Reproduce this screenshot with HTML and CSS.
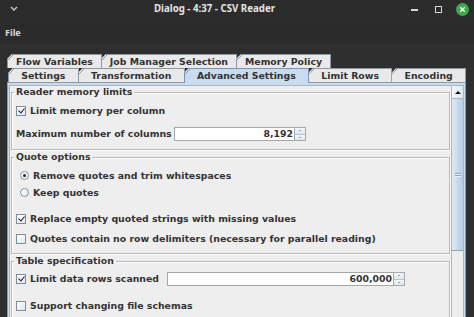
FILE: index.html
```html
<!DOCTYPE html>
<html>
<head>
<meta charset="utf-8">
<title>Dialog - 4:37 - CSV Reader</title>
<link rel="stylesheet" href="styles.css">
</head>
<body>
<div class="window">
  <header class="titlebar">
    <div class="tb-left">
      <svg class="chev" width="8" height="5" viewBox="0 0 8 5"><path d="M1 1 L4 4 L7 1" fill="none" stroke="#cfcfcf" stroke-width="1.3"/></svg>
    </div>
    <div class="tb-title">Dialog - 4:37 - CSV Reader</div>
    <div class="tb-controls">
      <span class="ctl-min"></span>
      <span class="ctl-max"></span>
      <span class="ctl-close"><svg width="7" height="7" viewBox="0 0 7 7"><path d="M1.2 1.2 L5.8 5.8 M5.8 1.2 L1.2 5.8" stroke="#ffffff" stroke-width="1.3"/></svg></span>
    </div>
  </header>
  <nav class="menubar"><span class="menu-item">File</span></nav>
  <main class="dialog">
    <div class="tabs">
      <div class="tabrow back">
        <div class="tab">Flow Variables</div>
        <div class="tab">Job Manager Selection</div>
        <div class="tab">Memory Policy</div>
      </div>
      <div class="tabrow front">
        <div class="tab">Settings</div>
        <div class="tab">Transformation</div>
        <div class="tab selected">Advanced Settings</div>
        <div class="tab">Limit Rows</div>
        <div class="tab">Encoding</div>
      </div>
    </div>
    <div class="panel">
      <div class="scrollpane">
        <div class="viewport">
          <fieldset class="group g-memory">
            <legend>Reader memory limits</legend>
            <div class="row r-check">
              <span class="cb checked"></span><span class="lbl">Limit memory per column</span>
            </div>
            <div class="row r-field">
              <span class="lbl lbl-cols">Maximum number of columns</span>
              <div class="spinner w-cols">
                <div class="spin-field">8,192</div>
                <div class="spin-btns"><span class="spin-up"></span><span class="spin-dn"></span></div>
              </div>
            </div>
          </fieldset>
          <fieldset class="group g-quote">
            <legend>Quote options</legend>
            <div class="radios">
              <div class="row r-radio"><span class="rb selected"></span><span class="lbl">Remove quotes and trim whitespaces</span></div>
              <div class="row r-radio"><span class="rb"></span><span class="lbl">Keep quotes</span></div>
            </div>
            <div class="row r-check r-replace"><span class="cb checked"></span><span class="lbl">Replace empty quoted strings with missing values</span></div>
            <div class="row r-check r-delim"><span class="cb"></span><span class="lbl">Quotes contain no row delimiters (necessary for parallel reading)</span></div>
          </fieldset>
          <fieldset class="group g-table">
            <legend>Table specification</legend>
            <div class="row r-field r-rows">
              <span class="cb checked"></span><span class="lbl lbl-rows">Limit data rows scanned</span>
              <div class="spinner w-rows">
                <div class="spin-field">600,000</div>
                <div class="spin-btns"><span class="spin-up"></span><span class="spin-dn"></span></div>
              </div>
            </div>
            <div class="row r-check r-schema"><span class="cb"></span><span class="lbl">Support changing file schemas</span></div>
          </fieldset>
        </div>
        <div class="scrollbar">
          <div class="sb-up"><span class="sb-arrow"></span></div>
          <div class="sb-thumb"><span class="grip"></span></div>
          <div class="sb-track"></div>
        </div>
      </div>
    </div>
  </main>
</div>
</body>
</html>
```

FILE: styles.css
```css
* { box-sizing: border-box; }

html, body {
  margin: 0;
  padding: 0;
}

body {
  width: 474px;
  height: 317px;
  overflow: hidden;
  background: #2d2d2d;
  font-family: "DejaVu Sans", "Liberation Sans", sans-serif;
}

.window {
  display: flex;
  flex-direction: column;
  height: 317px;
}

/* ---------- title bar ---------- */
.titlebar {
  height: 18px;
  display: flex;
  align-items: center;
  background: #2c2c2c;
  color: #e2e2e2;
}

.tb-left {
  width: 28px;
  display: flex;
  justify-content: center;
  align-items: center;
}

.chev { display: block; margin-top: -1px; }

.tb-title {
  flex: 1;
  text-align: center;
  font-family: "Noto Sans", "DejaVu Sans", sans-serif;
  font-weight: bold;
  font-size: 9.7px;
  line-height: 14px;
  color: #e4e4e4;
}

.tb-controls {
  width: 73px;
  display: flex;
  align-items: center;
  padding-left: 10px;
}

.ctl-min {
  width: 7px;
  height: 2px;
  background: #d8d8d8;
  margin-top: 2px;
}

.ctl-max {
  width: 7px;
  height: 7px;
  border: 1px solid #d8d8d8;
  margin-left: 17px;
}

.ctl-close {
  width: 13px;
  height: 13px;
  border-radius: 50%;
  background: #3aaa4b;
  margin-left: 14px;
  display: flex;
  align-items: center;
  justify-content: center;
}

.ctl-close svg { display: block; }

/* ---------- menu bar ---------- */
.menubar {
  height: 26px;
  padding: 8px 0 0 5px;
  background: #2b2b2b;
}

.menu-item {
  display: block;
  font-family: "Noto Sans", "DejaVu Sans", sans-serif;
  font-size: 9px;
  line-height: 14px;
  color: #dcdcdc;
  font-weight: bold;
}

/* ---------- dialog ---------- */
.dialog {
  flex: 1;
  min-height: 0;
  display: flex;
  flex-direction: column;
  padding: 10px 8px 0 7px;
  background: #2f2f2f;
}

.tabs {
  display: flex;
  flex-direction: column;
}

.tabrow {
  display: flex;
  height: 14px;
}

.tabrow.front { margin-left: 1px; }

.tab {
  height: 14px;
  border: 1px solid #8d9aa6;
  border-bottom: none;
  padding: 0 8px;
  font-weight: bold;
  font-size: 9.35px;
  line-height: 13px;
  color: #333333;
  white-space: nowrap;
  text-align: center;
  clip-path: polygon(5px 0, 100% 0, 100% 100%, 0 100%, 0 5px);
  background:
    linear-gradient(135deg, transparent 0 2.9px, #8d9aa6 2.9px 3.9px, transparent 3.9px) 0 0 / 6px 6px no-repeat,
    #e9e9e9;
}

.tabrow.back .tab { flex: none; }
.tabrow.back .tab + .tab { margin-left: -1px; }

.tabrow.front .tab { flex: 1 1 auto; }
.tabrow.front .tab + .tab { margin-left: -1px; }

.tab.selected {
  position: relative;
  z-index: 1;
  height: 15px;
  border-color: #7f97ae;
  background:
    linear-gradient(135deg, transparent 0 2.9px, #7f97ae 2.9px 3.9px, transparent 3.9px) 0 0 / 6px 6px no-repeat,
    #c9dcef;
}

/* ---------- content panel ---------- */
.panel {
  flex: 1;
  min-height: 0;
  display: flex;
  flex-direction: column;
  border: 1px solid #8d9aa6;
  border-bottom: none;
  background: #c9dcef;
  padding: 2px 1px 0 1px;
}

.scrollpane {
  flex: 1;
  min-height: 0;
  display: flex;
  background: #eeeeee;
  border: 1px solid #a9b5c0;
  border-bottom: none;
}

.viewport {
  flex: 1;
  min-width: 0;
  display: flex;
  flex-direction: column;
  padding: 0 1px 0 1px;
}

/* ---------- titled groups ---------- */
.group {
  margin: 0;
  padding: 0 4px 4px 4px;
  border: 1px solid #b9b9b9;
  box-shadow: inset 1px 1px 0 #ffffff, 1px 1px 0 #ffffff;
  min-width: 0;
}

.group legend {
  margin-left: -2px;
  padding: 0 2px;
  font-weight: bold;
  font-size: 9.35px;
  line-height: 12px;
  color: #333333;
}

.g-quote { margin-top: 1px; }
.g-table { margin-top: 1px; }

.row {
  display: flex;
  align-items: center;
  font-weight: bold;
  font-size: 9.35px;
  color: #333333;
  white-space: nowrap;
}

.lbl { line-height: 12px; }

.r-check { height: 20px; }
.g-memory .r-check { margin-top: 3px; }

.r-field { height: 22px; margin-top: 2px; }

.lbl-cols { width: 158px; }

.radios { padding: 4px 0 0 4px; }
.r-radio { height: 17px; }

.r-replace { margin-top: 8px; }
.r-delim { margin-top: 0; }

.r-rows { margin-top: 1px; }
.lbl-rows { width: 137px; }
.r-schema { margin-top: 6px; }

/* checkbox */
.cb {
  flex: none;
  width: 10px;
  height: 10px;
  margin-right: 4px;
  border: 1px solid #7f8e9c;
  background: linear-gradient(135deg, #ffffff 0%, #dfe6ee 100%);
  position: relative;
}

.cb.checked::after {
  content: "";
  position: absolute;
  left: 2px;
  top: 0px;
  width: 3px;
  height: 5px;
  border: solid #222222;
  border-width: 0 1.4px 1.4px 0;
  transform: rotate(40deg);
  transform-origin: 60% 60%;
}

/* radio */
.rb {
  flex: none;
  width: 9px;
  height: 9px;
  margin-right: 4px;
  border: 1px solid #8796a4;
  border-radius: 50%;
  background: radial-gradient(circle at 35% 35%, #ffffff 0%, #d8e2ec 100%);
  display: flex;
  align-items: center;
  justify-content: center;
}

.rb.selected::after {
  content: "";
  width: 3px;
  height: 3px;
  border-radius: 50%;
  background: #222222;
}

/* spinner */
.spinner {
  display: flex;
  height: 14px;
}

.w-cols { width: 132px; }
.w-rows { width: 238px; }

.spin-field {
  flex: 1;
  background: #ffffff;
  border: 1px solid #a7a7a7;
  border-right: none;
  text-align: right;
  padding-right: 1px;
  line-height: 12px;
  font-weight: bold;
  font-size: 9.35px;
  color: #333333;
}

.spin-btns {
  width: 12px;
  display: flex;
  flex-direction: column;
  border: 1px solid #a7a7a7;
}

.spin-up, .spin-dn {
  flex: 1;
  display: flex;
  align-items: center;
  justify-content: center;
  background: linear-gradient(#f4f7fa, #dfe6ed);
}

.spin-up { border-bottom: 1px solid #b9c3cc; }

.spin-up::after {
  content: "";
  border-left: 1.5px solid transparent;
  border-right: 1.5px solid transparent;
  border-bottom: 1.5px solid #555555;
}

.spin-dn::after {
  content: "";
  border-left: 1.5px solid transparent;
  border-right: 1.5px solid transparent;
  border-top: 1.5px solid #555555;
}

/* ---------- scrollbar ---------- */
.scrollbar {
  width: 12px;
  display: flex;
  flex-direction: column;
  border-left: 1px solid #a9b5c0;
  background: #eeeeee;
}

.sb-up {
  height: 13px;
  display: flex;
  align-items: center;
  justify-content: center;
  border-bottom: 1px solid #a9b5c0;
  background: linear-gradient(90deg, #f3f6f9, #dde6ef);
}

.sb-arrow {
  border-left: 3px solid transparent;
  border-right: 3px solid transparent;
  border-bottom: 3px solid #111111;
}

.sb-thumb {
  height: 152px;
  border-bottom: 1px solid #8fa4b8;
  background: linear-gradient(90deg, #dfeaf6 0%, #c3d6ea 60%, #b8cde3 100%);
  display: flex;
  align-items: center;
  justify-content: center;
}

.grip {
  width: 6px;
  height: 4px;
  background: repeating-linear-gradient(#8aa2ba 0 1px, #eef4fa 1px 2px);
}

.sb-track {
  flex: 1;
  background: #eeeeee;
}
```
